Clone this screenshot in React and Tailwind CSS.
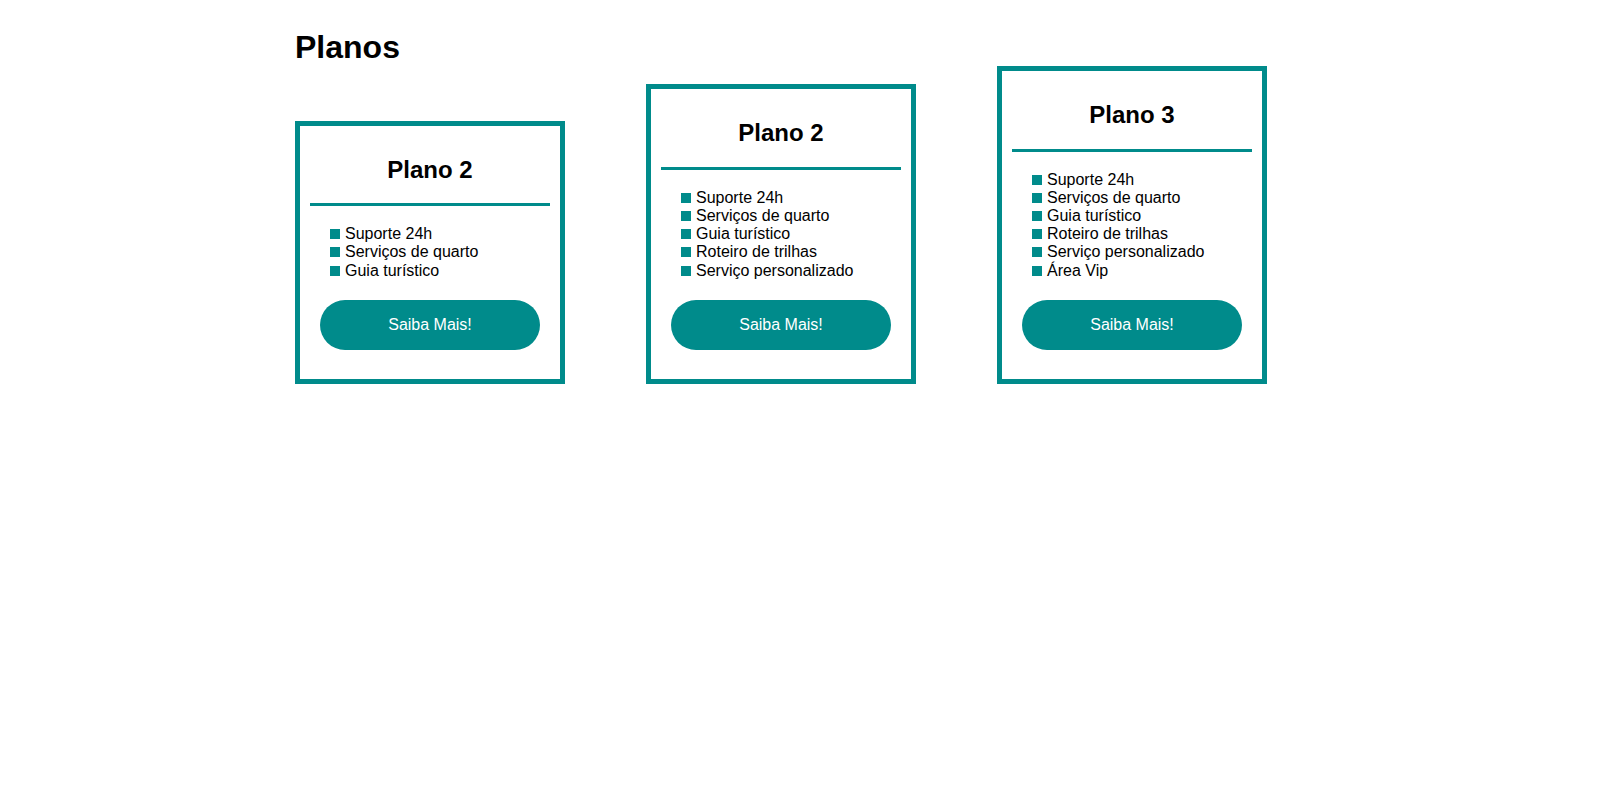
import React from 'react';

const planos = [
    {
        id: 1,
        titulo: 'Plano 2',
        itens: ['Suporte 24h', 'Serviços de quarto', 'Guia turístico'],
    },
    {
        id: 2,
        titulo: 'Plano 2',
        itens: ['Suporte 24h', 'Serviços de quarto', 'Guia turístico', 'Roteiro de trilhas', 'Serviço personalizado'],
    },
    {
        id: 3,
        titulo: 'Plano 3',
        itens: ['Suporte 24h', 'Serviços de quarto', 'Guia turístico', 'Roteiro de trilhas', 'Serviço personalizado', 'Área Vip'],
    },
];

const CardPlano = ({ plano }) => {
    return (
        <div className="w-[270px] border-[5px] border-[#008b8b] bg-white px-[10px] pt-[10px] pb-[29px]">
            <h2 className="mt-[20px] text-center text-[24px] font-bold leading-[27.6px] text-black">
                {plano.titulo}
            </h2>
            <div className="mt-[20px] h-[3px] bg-[#008b8b]" />
            <ul className="mt-[19px] pl-[20px]">
                {plano.itens.map((item) => (
                    <li key={item} className="text-[16px] leading-[18.2px] text-black">
                        <span className="mr-[5px] inline-block h-[10px] w-[10px] bg-[#008b8b]" />
                        {item}
                    </li>
                ))}
            </ul>
            <button className="mx-auto mt-[20px] flex h-[50px] w-[220px] items-center justify-center rounded-full bg-[#008b8b] text-[16px] text-white">
                Saiba Mais!
            </button>
        </div>
    );
};

const App = () => {
    return (
        <div className="min-h-screen bg-white font-['Liberation_Sans',Arial,sans-serif]">
            <div className="mx-auto w-[1009px] pt-[29px]">
                <h1 className="text-[32px] font-bold leading-[37px] text-black">Planos</h1>
                <div className="flex items-end gap-[81px]">
                    {planos.map((plano) => (
                        <CardPlano key={plano.id} plano={plano} />
                    ))}
                </div>
            </div>
        </div>
    );
};

export default App;
